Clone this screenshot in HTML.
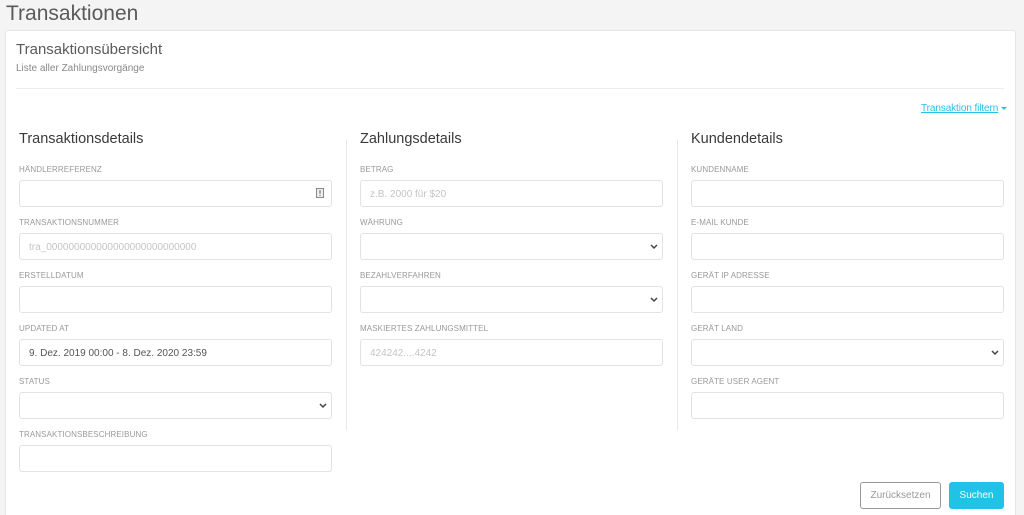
<!DOCTYPE html>
<html><head><meta charset="utf-8"><style>
*{box-sizing:border-box;margin:0;padding:0}
html,body{width:1024px;height:515px;overflow:hidden}
body{background:#f4f4f4;font-family:"Liberation Sans",sans-serif;position:relative;color:#444}
.a{position:absolute}
h1{position:absolute;left:6px;top:2px;font-size:21px;font-weight:normal;color:#5a5a5a}
.card{position:absolute;left:5px;top:30px;width:1011px;height:490px;background:#fff;border:1px solid #e6e6e6;border-radius:3px}
.t{font-size:15px;color:#5a5a5a}
.sub{font-size:10px;color:#888}
.sec{font-size:14.5px;color:#3a3a3a}
.lbl{font-size:8px;color:#999;letter-spacing:.1px}
.in{position:absolute;height:27px;border:1px solid #e2e2e2;border-radius:3px;background:#fff;font-size:10px;color:#555;padding:8px 9px}
.ph{color:#c4c4c4}
.ch{position:absolute;right:3px;top:8px}
.vl{position:absolute;width:1px;background:#e8e8e8;top:140px;height:290px}
</style></head><body>
<h1>Transaktionen</h1>
<div class="card"></div>
<div class="a t" style="left:16px;top:41px">Transaktionsübersicht</div>
<div class="a sub" style="left:16px;top:63px">Liste aller Zahlungsvorgänge</div>
<div class="a" style="left:16px;top:88px;width:988px;height:1px;background:#ececec"></div>
<div class="a" style="left:921px;top:103px;font-size:10px;color:#27c1e6;text-decoration:underline;letter-spacing:-.1px">Transaktion filtern</div>
<div class="a" style="left:1001px;top:107px;border-left:3px solid transparent;border-right:3px solid transparent;border-top:3px solid #27c1e6"></div>
<div class="vl" style="left:346px"></div>
<div class="vl" style="left:677px"></div>

<div class="a sec" style="left:19px;top:131px">Transaktionsdetails</div>
<div class="a sec" style="left:360px;top:131px">Zahlungsdetails</div>
<div class="a sec" style="left:691px;top:131px">Kundendetails</div>

<!-- col1 -->
<div class="a lbl" style="left:19px;top:165px">HÄNDLERREFERENZ</div>
<div class="in" style="left:19px;top:180px;width:313px"><svg class="ch" style="right:7px;top:7px" width="8" height="10" viewBox="0 0 8 10"><rect x=".5" y=".5" width="7" height="9" fill="#eee" stroke="#888"/><rect x="3.5" y="2" width="1" height="4" fill="#666"/><rect x="3.5" y="7" width="1" height="1" fill="#666"/></svg></div>
<div class="a lbl" style="left:19px;top:218px">TRANSAKTIONSNUMMER</div>
<div class="in ph" style="left:19px;top:233px;width:313px">tra_000000000000000000000000000</div>
<div class="a lbl" style="left:19px;top:271px">ERSTELLDATUM</div>
<div class="in" style="left:19px;top:286px;width:313px"></div>
<div class="a lbl" style="left:19px;top:324px">UPDATED AT</div>
<div class="in" style="left:19px;top:339px;width:313px">9. Dez. 2019 00:00 - 8. Dez. 2020 23:59</div>
<div class="a lbl" style="left:19px;top:377px">STATUS</div>
<div class="in" style="left:19px;top:392px;width:313px"><svg class="ch" style="right:4px;top:10px" width="8" height="6"><path d="M1 1l3 3 3-3" stroke="#444" stroke-width="1.5" fill="none"/></svg></div>
<div class="a lbl" style="left:19px;top:430px">TRANSAKTIONSBESCHREIBUNG</div>
<div class="in" style="left:19px;top:445px;width:313px"></div>

<!-- col2 -->
<div class="a lbl" style="left:360px;top:165px">BETRAG</div>
<div class="in ph" style="left:360px;top:180px;width:303px">z.B. 2000 für $20</div>
<div class="a lbl" style="left:360px;top:218px">WÄHRUNG</div>
<div class="in" style="left:360px;top:233px;width:303px"><svg class="ch" style="right:4px;top:10px" width="8" height="6"><path d="M1 1l3 3 3-3" stroke="#444" stroke-width="1.5" fill="none"/></svg></div>
<div class="a lbl" style="left:360px;top:271px">BEZAHLVERFAHREN</div>
<div class="in" style="left:360px;top:286px;width:303px"><svg class="ch" style="right:4px;top:10px" width="8" height="6"><path d="M1 1l3 3 3-3" stroke="#444" stroke-width="1.5" fill="none"/></svg></div>
<div class="a lbl" style="left:360px;top:324px">MASKIERTES ZAHLUNGSMITTEL</div>
<div class="in ph" style="left:360px;top:339px;width:303px">424242....4242</div>

<!-- col3 -->
<div class="a lbl" style="left:691px;top:165px">KUNDENNAME</div>
<div class="in" style="left:691px;top:180px;width:313px"></div>
<div class="a lbl" style="left:691px;top:218px">E-MAIL KUNDE</div>
<div class="in" style="left:691px;top:233px;width:313px"></div>
<div class="a lbl" style="left:691px;top:271px">GERÄT IP ADRESSE</div>
<div class="in" style="left:691px;top:286px;width:313px"></div>
<div class="a lbl" style="left:691px;top:324px">GERÄT LAND</div>
<div class="in" style="left:691px;top:339px;width:313px"><svg class="ch" style="right:4px;top:10px" width="8" height="6"><path d="M1 1l3 3 3-3" stroke="#444" stroke-width="1.5" fill="none"/></svg></div>
<div class="a lbl" style="left:691px;top:377px">GERÄTE USER AGENT</div>
<div class="in" style="left:691px;top:392px;width:313px"></div>

<div class="a" style="left:860px;top:482px;width:81px;height:27px;border:1px solid #999;border-radius:3px;font-size:10px;color:#999;text-align:center;line-height:25px">Zurücksetzen</div>
<div class="a" style="left:949px;top:482px;width:55px;height:27px;background:#20c3e6;border-radius:3px;font-size:10px;color:#fff;text-align:center;line-height:27px">Suchen</div>
</body></html>
